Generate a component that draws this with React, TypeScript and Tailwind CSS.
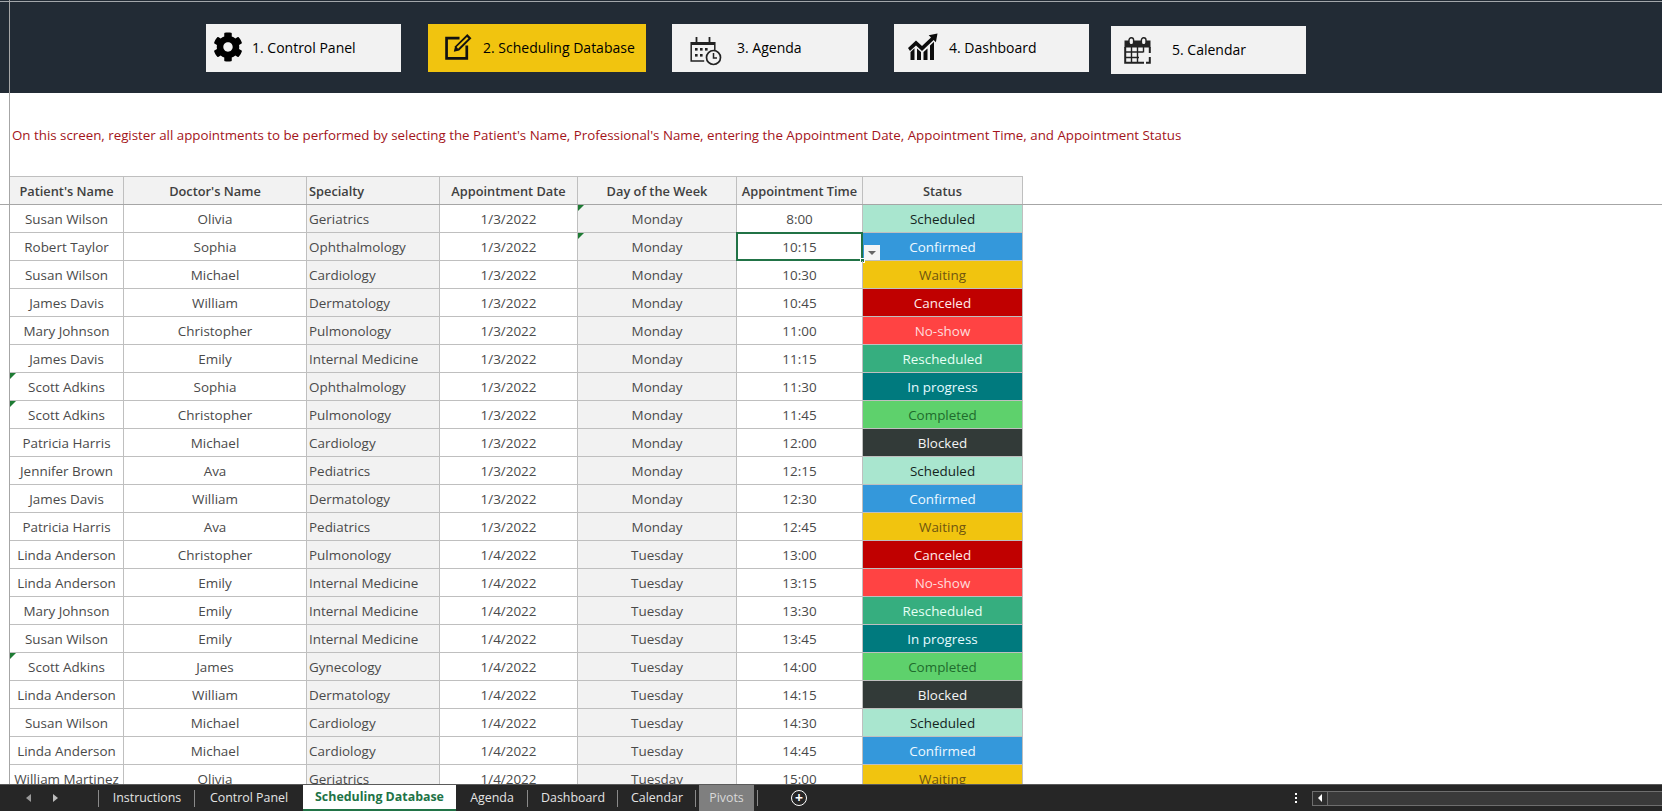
import React from "react";
import { FaCog } from "react-icons/fa";

type S = "Scheduled" | "Confirmed" | "Waiting" | "Canceled" | "No-show" | "Rescheduled" | "In progress" | "Completed" | "Blocked";

const statusClass: Record<S, string> = {
  Scheduled: "bg-[#a9e6cf] text-[#14241d]",
  Confirmed: "bg-[#3498db] text-[#eef8ff]",
  Waiting: "bg-[#f1c40f] text-[#6f5510]",
  Canceled: "bg-[#c00000] text-[#ffe9e9]",
  "No-show": "bg-[#ff4343] text-[#ffdcdc]",
  Rescheduled: "bg-[#36ae7f] text-[#e6fff5]",
  "In progress": "bg-[#007a7e] text-[#e6fbff]",
  Completed: "bg-[#5ed16c] text-[#1f6b2d]",
  Blocked: "bg-[#323a38] text-[#f4f4f4]",
};

const rows: [string, string, string, string, string, string, S, boolean?][] = [
  ["Susan Wilson", "Olivia", "Geriatrics", "1/3/2022", "Monday", "8:00", "Scheduled"],
  ["Robert Taylor", "Sophia", "Ophthalmology", "1/3/2022", "Monday", "10:15", "Confirmed"],
  ["Susan Wilson", "Michael", "Cardiology", "1/3/2022", "Monday", "10:30", "Waiting"],
  ["James Davis", "William", "Dermatology", "1/3/2022", "Monday", "10:45", "Canceled"],
  ["Mary Johnson", "Christopher", "Pulmonology", "1/3/2022", "Monday", "11:00", "No-show"],
  ["James Davis", "Emily", "Internal Medicine", "1/3/2022", "Monday", "11:15", "Rescheduled"],
  ["Scott Adkins", "Sophia", "Ophthalmology", "1/3/2022", "Monday", "11:30", "In progress", true],
  ["Scott Adkins", "Christopher", "Pulmonology", "1/3/2022", "Monday", "11:45", "Completed", true],
  ["Patricia Harris", "Michael", "Cardiology", "1/3/2022", "Monday", "12:00", "Blocked"],
  ["Jennifer Brown", "Ava", "Pediatrics", "1/3/2022", "Monday", "12:15", "Scheduled"],
  ["James Davis", "William", "Dermatology", "1/3/2022", "Monday", "12:30", "Confirmed"],
  ["Patricia Harris", "Ava", "Pediatrics", "1/3/2022", "Monday", "12:45", "Waiting"],
  ["Linda Anderson", "Christopher", "Pulmonology", "1/4/2022", "Tuesday", "13:00", "Canceled"],
  ["Linda Anderson", "Emily", "Internal Medicine", "1/4/2022", "Tuesday", "13:15", "No-show"],
  ["Mary Johnson", "Emily", "Internal Medicine", "1/4/2022", "Tuesday", "13:30", "Rescheduled"],
  ["Susan Wilson", "Emily", "Internal Medicine", "1/4/2022", "Tuesday", "13:45", "In progress"],
  ["Scott Adkins", "James", "Gynecology", "1/4/2022", "Tuesday", "14:00", "Completed", true],
  ["Linda Anderson", "William", "Dermatology", "1/4/2022", "Tuesday", "14:15", "Blocked"],
  ["Susan Wilson", "Michael", "Cardiology", "1/4/2022", "Tuesday", "14:30", "Scheduled"],
  ["Linda Anderson", "Michael", "Cardiology", "1/4/2022", "Tuesday", "14:45", "Confirmed"],
  ["William Martinez", "Olivia", "Geriatrics", "1/4/2022", "Tuesday", "15:00", "Waiting"],
];

const gridCols = "grid grid-cols-[114px_183px_133px_138px_159px_126px_160px]";
const cell = "flex items-center justify-center pt-[2px] whitespace-nowrap overflow-visible border-r border-b border-[#bfbfbf]";

function Tri() {
  return <span className="absolute left-0 top-0 w-0 h-0 border-t-[6px] border-r-[6px] border-t-[#1e7b34] border-r-transparent" />;
}

function GearIcon() {
  return <FaCog className="w-[30px] h-[30px] mb-[2px] text-black shrink-0" />;
}

function EditIcon() {
  return (
    <svg viewBox="0 0 27 26" className="w-[28px] h-[27px] mb-[3px] shrink-0" fill="none">
      <path d="M14 5H1.5v19.5H21V12" stroke="#111" strokeWidth="2.6" />
      <path d="M8.5 18l1.2-5.2L21.5 1l4 4L13.7 16.8z" fill="#111" />
      <path d="M11.2 13.6l1.4 1.6 10-10-1.4-1.4z" fill="#f1c40f" />
    </svg>
  );
}

function AgendaIcon() {
  return (
    <svg viewBox="0 0 32 30" className="w-[32px] h-[30px] mt-[5px] shrink-0" fill="none">
      <path d="M1 6h24v3H1z" fill="#222" />
      <path d="M1.2 6v19h13M24.8 6v9" stroke="#222" strokeWidth="1.5" />
      <path d="M6.5 1v7M19.5 1v7" stroke="#222" strokeWidth="1.8" />
      <g fill="#222">
        <rect x="5" y="12" width="2.6" height="2.6" />
        <rect x="10" y="12" width="2.6" height="2.6" />
        <rect x="15" y="12" width="2.6" height="2.6" />
        <rect x="5" y="18" width="2.6" height="2.6" />
        <rect x="10" y="18" width="2.6" height="2.6" />
      </g>
      <circle cx="23.5" cy="21.5" r="7" fill="#f2f2f2" stroke="#222" strokeWidth="1.7" />
      <path d="M23.5 17v5h3.5" stroke="#222" strokeWidth="1.5" />
    </svg>
  );
}

function ChartIcon() {
  return (
    <svg viewBox="0 0 31 27" className="w-[31px] h-[27px] mb-[4px] -ml-[1px] shrink-0">
      <path d="M1 15L9 7.5l6 5.5L24 4.5l-2.3-2.3L30.5 0.5l-1.6 8.8L26.6 7 15 18l-6-5.5-6 5.6z" fill="#0d0d0d" />
      <path d="M3.5 27V19l4-3.7V27zM10 27V15.5l4 3.6V27zM16.5 27V19l4-3.6V27zM23 27V12.5l4-3.8V27z" fill="#0d0d0d" />
    </svg>
  );
}

function CalendarIcon() {
  return (
    <svg viewBox="0 0 27 27" className="w-[27px] h-[27px] shrink-0" fill="none">
      <path d="M0.5 3.5h26v7h-26z" fill="#222" />
      <rect x="5" y="0.8" width="4.6" height="7" rx="2.2" fill="#f2f2f2" stroke="#222" strokeWidth="1.4" />
      <rect x="17.4" y="0.8" width="4.6" height="7" rx="2.2" fill="#f2f2f2" stroke="#222" strokeWidth="1.4" />
      <path d="M1.2 10v15.8H20M25.8 20v5.8H22M25.8 10v6" stroke="#222" strokeWidth="2" />
      <path d="M1 15h18M1 20.5h14M7.5 10v16M13.5 10v16M19.5 10v5.5" stroke="#222" strokeWidth="1.4" />
    </svg>
  );
}

function NavButton({ w, icon, label, iconGap, left, active, extra }: { w: string; icon: React.ReactNode; label: string; iconGap: string; left: string; active?: boolean; extra?: string }) {
  return (
    <div className={`h-[48px] flex items-center shrink-0 ${w} ${left} ${active ? "bg-[#f1c40f]" : "bg-[#f2f2f2]"} ${extra ?? ""}`}>
      {icon}
      <span className={`${iconGap} pb-[2px] text-[14px] text-black whitespace-nowrap`}>{label}</span>
    </div>
  );
}

function Tab({ label, w, sep = true, className = "" }: { label: string; w: string; sep?: boolean; className?: string }) {
  return (
    <div className={`h-full flex items-center justify-center shrink-0 relative text-[12.4px] whitespace-nowrap text-[#e4e4e4] ${w} ${className}`}>
      {label}
      {sep && <span className="absolute right-0 top-[5px] bottom-[4px] w-px bg-[#8a8a8a]" />}
    </div>
  );
}

export default function App() {
  return (
    <div className="relative w-[1662px] h-[811px] overflow-hidden bg-white flex flex-col font-['Open_Sans','Noto_Sans',sans-serif] text-[13.45px] text-[#4a4a4a]">
      {/* frozen top pane */}
      <div className="h-[205px] shrink-0 flex flex-col border-b border-[#a6a6a6]">
        <div className="h-[93px] shrink-0 bg-[#222b35] pt-px">
          <div className="h-px bg-[#a3a7ab]" />
          <div className="flex items-start pl-[206px] pt-[22px]">
            <NavButton w="w-[195px]" left="pl-[7px]" iconGap="ml-[9px]" icon={<GearIcon />} label="1. Control Panel" />
            <NavButton w="w-[218px] ml-[27px]" left="pl-[17px]" iconGap="ml-[10px]" active icon={<EditIcon />} label="2. Scheduling Database" />
            <NavButton w="w-[196px] ml-[26px]" left="pl-[18px]" iconGap="ml-[15px]" icon={<AgendaIcon />} label="3. Agenda" />
            <NavButton w="w-[195px] ml-[26px]" left="pl-[14px]" iconGap="ml-[11px]" icon={<ChartIcon />} label="4. Dashboard" />
            <NavButton w="w-[195px] ml-[22px]" left="pl-[13px]" iconGap="ml-[21px]" extra="mt-[2px]" icon={<CalendarIcon />} label="5. Calendar" />
          </div>
        </div>
        <div className="h-[83px] shrink-0 flex items-center pl-[12px] pt-[2px]">
          <span className="text-[13.32px] text-[#a3141a] whitespace-nowrap">
            On this screen, register all appointments to be performed by selecting the Patient's Name, Professional's Name, entering the Appointment Date, Appointment Time, and Appointment Status
          </span>
        </div>
        <div className={`${gridCols} ml-[9px] h-[28px] w-[1014px] border-t border-l border-[#bfbfbf] bg-[#f2f2f2] font-semibold text-[12.8px] text-[#404040]`}>
          {["Patient's Name", "Doctor's Name"].map((h) => (
            <div key={h} className="flex items-center justify-center pt-[2px] whitespace-nowrap border-r border-[#bfbfbf]">{h}</div>
          ))}
          <div className="flex items-center pl-[2px] pt-[2px] border-r border-[#bfbfbf]">Specialty</div>
          {["Appointment Date", "Day of the Week", "Appointment Time", "Status"].map((h) => (
            <div key={h} className="flex items-center justify-center pt-[2px] whitespace-nowrap border-r border-[#bfbfbf]">{h}</div>
          ))}
        </div>
      </div>

      {/* data rows */}
      <div className="flex-1 min-h-0 overflow-hidden">
        {rows.map((r, i) => (
          <div key={i} className={`${gridCols} ml-[9px] w-[1014px] h-[28px] border-l border-[#bfbfbf]`}>
            <div className={`${cell} relative`}>
              {r[7] && <Tri />}
              {r[0]}
            </div>
            <div className={cell}>{r[1]}</div>
            <div className={`${cell} !justify-start pl-[2px] bg-[#f2f2f2]`}>{r[2]}</div>
            <div className={cell}>{r[3]}</div>
            <div className={`${cell} relative bg-[#f2f2f2]`}>
              {i < 2 && <Tri />}
              {r[4]}
            </div>
            <div className={`${cell} relative`}>
              {r[5]}
              {i === 1 && (
                <>
                  <span className="absolute -left-px -top-px -right-px -bottom-px border-2 border-[#217346]" />
                  <span className="absolute -right-[3px] -bottom-[3px] w-[5px] h-[5px] bg-[#217346] border border-white" />
                  <span className="absolute -right-[18px] top-[12px] w-[16px] h-[15px] bg-[#f4f4f4] flex items-center justify-center z-10">
                    <span className="w-0 h-0 border-x-[4px] border-x-transparent border-t-[4px] border-t-[#666]" />
                  </span>
                </>
              )}
            </div>
            <div className={`${cell} ${statusClass[r[6]]}`}>{r[6]}</div>
          </div>
        ))}
      </div>

      {/* sheet tab bar */}
      <div className="h-[27px] shrink-0 bg-[#262626] border-t border-[#5a5a5a] flex items-stretch text-[#e4e4e4]">
        <div className="w-[99px] shrink-0 relative flex items-center pl-[26px] gap-[22px]">
          <span className="w-0 h-0 border-y-[4px] border-y-transparent border-r-[5px] border-r-[#9a9a9a]" />
          <span className="w-0 h-0 border-y-[4px] border-y-transparent border-l-[5px] border-l-[#bdbdbd]" />
          <span className="absolute right-0 top-[5px] bottom-[4px] w-px bg-[#8a8a8a]" />
        </div>
        <Tab label="Instructions" w="w-[96px]" />
        <Tab label="Control Panel" w="w-[108px]" sep={false} />
        <Tab label="Scheduling Database" w="w-[153px]" sep={false} className="bg-white font-bold !text-[#217346] border-b-2 border-[#217346]" />
        <Tab label="Agenda" w="w-[72px]" />
        <Tab label="Dashboard" w="w-[90px]" />
        <Tab label="Calendar" w="w-[78px]" />
        <Tab label="Pivots" w="w-[55px] ml-[3px]" sep={false} className="bg-[#7f7f7f] !text-[#d9d9d9]" />
        <div className="w-px bg-[#8a8a8a] ml-[3px] my-[5px]" />
        <div className="w-[16px] h-[16px] ml-[33px] self-center rounded-full border-[1.5px] border-white flex items-center justify-center text-white font-bold text-[14px] leading-none">+</div>
        <div className="ml-[488px] self-center flex flex-col gap-[2px]">
          <span className="w-[2px] h-[2px] bg-white" />
          <span className="w-[2px] h-[2px] bg-white" />
          <span className="w-[2px] h-[2px] bg-white" />
        </div>
        <div className="ml-[15px] self-center flex-1 h-[15px] border border-[#6e6e6e] border-r-0 bg-[#3a3a3a] flex">
          <div className="w-[15px] h-full border-r border-[#6e6e6e] bg-[#2e2e2e] flex items-center justify-center">
            <span className="w-0 h-0 border-y-[4px] border-y-transparent border-r-[4px] border-r-white" />
          </div>
        </div>
      </div>

      {/* freeze-pane line across the sheet */}
      <div className="absolute left-[9px] top-0 h-[784px] w-px bg-[#a6a6a6]" />
    </div>
  );
}
